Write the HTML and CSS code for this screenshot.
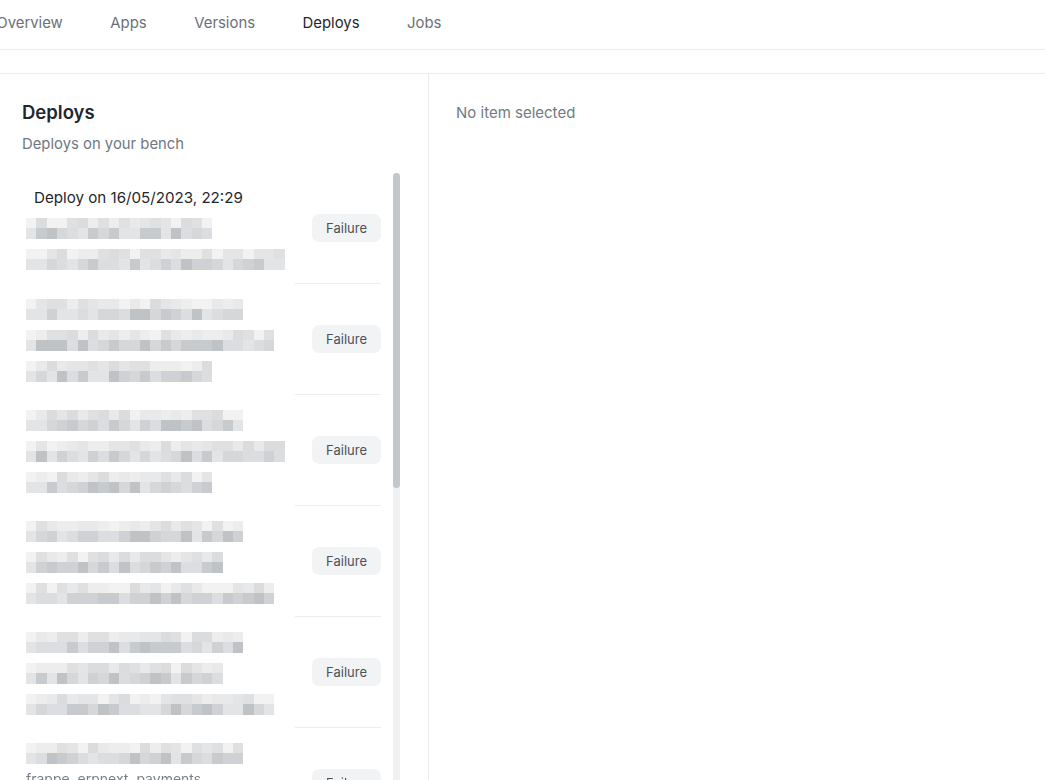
FILE: index.html
```html
<!DOCTYPE html>
<html lang="en">
<head>
<meta charset="utf-8">
<title>Deploys</title>
<link rel="stylesheet" href="styles.css">
</head>
<body>
<nav class="topnav">
  <div class="tabs">
    <a class="tab">Overview</a>
    <a class="tab">Apps</a>
    <a class="tab">Versions</a>
    <a class="tab active">Deploys</a>
    <a class="tab">Jobs</a>
  </div>
</nav>
<div class="gap"></div>
<main class="panel">
  <section class="left">
    <h1 class="title">Deploys</h1>
    <p class="subtitle">Deploys on your bench</p>
    <div class="list">
      <div class="items">
        <div class="item first">
          <div class="info">
            <div class="item-title">Deploy on 16/05/2023, 22:29</div>
            <canvas class="mosaic" data-rows="18,25" data-seed="11"></canvas>
          </div>
          <div class="side"><span class="badge">Failure</span></div>
        </div>
        <div class="item">
          <div class="info">
            <canvas class="mosaic" data-rows="21,24,18" data-seed="23"></canvas>
          </div>
          <div class="side"><span class="badge">Failure</span></div>
        </div>
        <div class="item">
          <div class="info">
            <canvas class="mosaic" data-rows="21,25,18" data-seed="37"></canvas>
          </div>
          <div class="side"><span class="badge">Failure</span></div>
        </div>
        <div class="item">
          <div class="info">
            <canvas class="mosaic" data-rows="21,19,24" data-seed="41"></canvas>
          </div>
          <div class="side"><span class="badge">Failure</span></div>
        </div>
        <div class="item">
          <div class="info">
            <canvas class="mosaic" data-rows="21,19,24" data-seed="53"></canvas>
          </div>
          <div class="side"><span class="badge">Failure</span></div>
        </div>
        <div class="item">
          <div class="info">
            <canvas class="mosaic" data-rows="21" data-seed="67"></canvas>
            <div class="plain-line">frappe, erpnext, payments</div>
          </div>
          <div class="side"><span class="badge">Failure</span></div>
        </div>
      </div>
      <div class="scrollbar"><div class="thumb"></div></div>
    </div>
  </section>
  <section class="right">
    <p class="empty">No item selected</p>
  </section>
</main>
<script src="script.js"></script>
</body>
</html>
```

FILE: styles.css
```css
* { box-sizing: border-box; }
html, body {
  margin: 0;
  height: 780px;
  overflow: hidden;
  background: #ffffff;
  font-family: Inter, "Noto Sans", "Liberation Sans", sans-serif;
  color: #1f272e;
}
.topnav {
  height: 50px;
  border-bottom: 1px solid #ececec;
}
.tabs {
  display: flex;
  margin-left: -27.5px;
  height: 46px;
  align-items: center;
}
.tab {
  padding: 0 23.75px;
  font-size: 14.9px;
  color: #6b7178;
}
.tab.active { color: #1f272e; }
.gap { height: 23px; }
.panel {
  display: flex;
  border-top: 1px solid #ececec;
  height: 707px;
}
.left {
  width: 429px;
  border-right: 1px solid #ededed;
  padding: 24px 0 0 22px;
  overflow: hidden;
}
.title {
  margin: 0;
  font-size: 18.5px;
  line-height: 28px;
  font-weight: 600;
  color: #1f272e;
}
.subtitle {
  margin: 8px 0 0;
  font-size: 14.85px;
  line-height: 20px;
  color: #6f7780;
}
.list {
  display: flex;
  margin-top: 19px;
}
.items { width: 359px; }
.item {
  display: flex;
  height: 111px;
}
.info {
  width: 273px;
  padding: 15px 0 0 12px;
}
.item.first .info { padding-top: 14px; }
.item-title {
  font-size: 15.15px;
  line-height: 22px;
  color: #1f272e;
}
.mosaic {
  display: block;
  margin-left: -8px;
}
.item.first .mosaic { margin-top: 9px; }
.plain-line {
  margin: 5px 0 0 -8px;
  font-size: 14px;
  line-height: 20px;
  color: #7a8088;
}
.side {
  flex: 1;
  display: flex;
  align-items: center;
  justify-content: flex-end;
  border-bottom: 1px solid #ededed;
}
.badge {
  height: 28px;
  padding: 0 14px;
  border-radius: 7px;
  background: #f2f3f4;
  color: #4c5259;
  font-size: 13px;
  line-height: 28px;
}
.scrollbar {
  margin-left: 12px;
  width: 7px;
  height: 620px;
  background: #f0f1f2;
  border-radius: 4px;
}
.thumb {
  height: 315px;
  background: #c3c7cb;
  border-radius: 4px;
}
.right {
  flex: 1;
  padding: 29px 0 0 27px;
}
.empty {
  margin: 0;
  font-size: 15px;
  line-height: 20px;
  color: #737a82;
}
```

FILE: script.js
```js
(function () {
  var B = 10.35;
  var top = ['#ededee', '#e8e9ea', '#e4e5e6', '#dfe0e2', '#dadcde', '#f2f2f3'];
  var bot = ['#e3e4e6', '#dcdde0', '#d5d7d9', '#cfd1d4', '#c8cbce', '#c0c3c6'];
  function rng(seed) {
    var s = seed * 7919 + 13;
    return function () {
      s = (s * 16807) % 2147483647;
      return (s - 1) / 2147483646;
    };
  }
  var canvases = document.querySelectorAll('canvas.mosaic');
  canvases.forEach(function (cv) {
    var rows = cv.getAttribute('data-rows').split(',').map(Number);
    var r = rng(Number(cv.getAttribute('data-seed')));
    var maxCols = Math.max.apply(null, rows);
    var w = Math.round(maxCols * B) + 2;
    var h = Math.round((rows.length * 3 - 1) * B);
    cv.width = w;
    cv.height = h;
    cv.style.width = w + 'px';
    cv.style.height = h + 'px';
    var ctx = cv.getContext('2d');
    rows.forEach(function (n, ri) {
      for (var band = 0; band < 2; band++) {
        var y0 = Math.round((ri * 3 + band) * B);
        var y1 = Math.round((ri * 3 + band + 1) * B);
        for (var c = 0; c < n; c++) {
          var x0 = Math.round(c * B);
          var x1 = Math.round((c + 1) * B);
          var pal = band === 0 ? top : bot;
          var k;
          if (c === 0) k = band === 0 ? 5 : 0;
          else k = Math.floor(r() * pal.length);
          ctx.fillStyle = pal[k];
          ctx.fillRect(x0, y0, x1 - x0, y1 - y0);
        }
      }
    });
  });
})();
```
